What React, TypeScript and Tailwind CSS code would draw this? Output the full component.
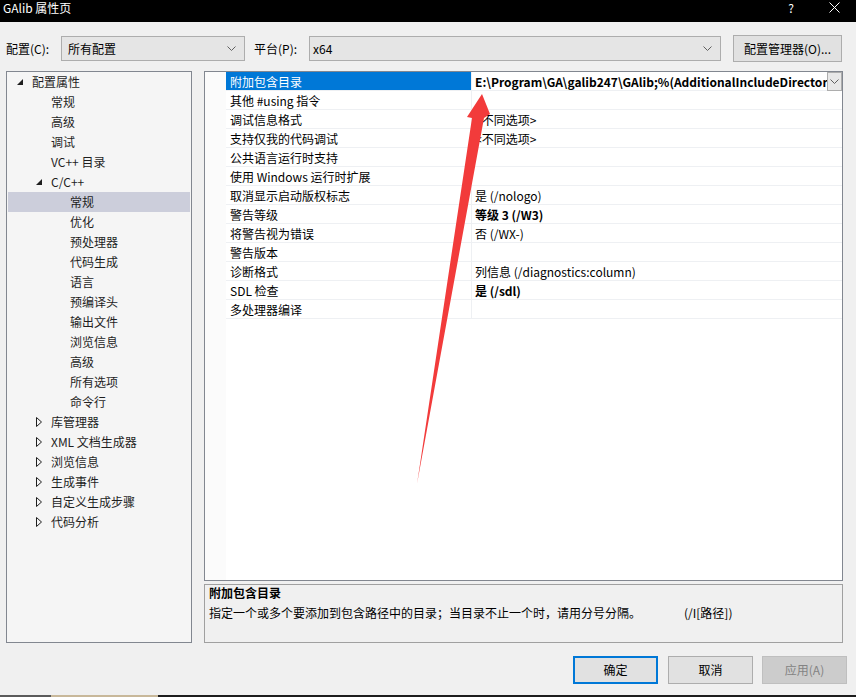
import React from "react";

const font = "font-['Noto_Sans_CJK_SC','Microsoft_YaHei',sans-serif]";

interface TreeItemProps {
  label: string;
  level: number;
  expander?: "open" | "closed";
  selected?: boolean;
}

const treeItems: TreeItemProps[] = [
  { label: "配置属性", level: 0, expander: "open" },
  { label: "常规", level: 1 },
  { label: "高级", level: 1 },
  { label: "调试", level: 1 },
  { label: "VC++ 目录", level: 1 },
  { label: "C/C++", level: 1, expander: "open" },
  { label: "常规", level: 2, selected: true },
  { label: "优化", level: 2 },
  { label: "预处理器", level: 2 },
  { label: "代码生成", level: 2 },
  { label: "语言", level: 2 },
  { label: "预编译头", level: 2 },
  { label: "输出文件", level: 2 },
  { label: "浏览信息", level: 2 },
  { label: "高级", level: 2 },
  { label: "所有选项", level: 2 },
  { label: "命令行", level: 2 },
  { label: "库管理器", level: 1, expander: "closed" },
  { label: "XML 文档生成器", level: 1, expander: "closed" },
  { label: "浏览信息", level: 1, expander: "closed" },
  { label: "生成事件", level: 1, expander: "closed" },
  { label: "自定义生成步骤", level: 1, expander: "closed" },
  { label: "代码分析", level: 1, expander: "closed" },
];

const props: { name: string; value?: string; bold?: boolean }[] = [
  { name: "附加包含目录", value: "E:\\Program\\GA\\galib247\\GAlib;%(AdditionalIncludeDirectories)", bold: true },
  { name: "其他 #using 指令" },
  { name: "调试信息格式", value: "<不同选项>" },
  { name: "支持仅我的代码调试", value: "<不同选项>" },
  { name: "公共语言运行时支持" },
  { name: "使用 Windows 运行时扩展" },
  { name: "取消显示启动版权标志", value: "是 (/nologo)" },
  { name: "警告等级", value: "等级 3 (/W3)", bold: true },
  { name: "将警告视为错误", value: "否 (/WX-)" },
  { name: "警告版本" },
  { name: "诊断格式", value: "列信息 (/diagnostics:column)" },
  { name: "SDL 检查", value: "是 (/sdl)", bold: true },
  { name: "多处理器编译" },
];

function Chevron({ className }: { className?: string }) {
  return (
    <svg width="9" height="5" viewBox="0 0 9 5" className={className}>
      <polyline points="0.5,0.5 4.5,4.5 8.5,0.5" fill="none" stroke="#606060" strokeWidth="1" />
    </svg>
  );
}

function TreeItem({ label, level, expander, selected }: TreeItemProps) {
  return (
    <div
      className={`h-[20px] mx-[1px] flex items-center ${selected ? "bg-[#cccedb]" : ""}`}
      style={{ paddingLeft: 9 + level * 19 }}
    >
      <span className="w-[15px] flex items-center">
        {expander === "open" && (
          <svg width="6" height="6" viewBox="0 0 6 6">
            <polygon points="6,0 6,6 0,6" fill="#1e1e1e" />
          </svg>
        )}
        {expander === "closed" && (
          <svg width="6" height="10" viewBox="0 0 6 10">
            <polygon points="0.5,0.5 5.5,5 0.5,9.5" fill="none" stroke="#1e1e1e" strokeWidth="1" />
          </svg>
        )}
      </span>
      <span className="text-[12px] leading-[20px] text-[#1e1e1e] whitespace-nowrap">{label}</span>
    </div>
  );
}

export default function App() {
  return (
    <div className={`${font} relative w-[856px] h-[697px] bg-[#f0f0f0] flex flex-col overflow-hidden text-black`}>
      {/* Title bar */}
      <div className="h-[22px] shrink-0 bg-black flex items-start text-white text-[12px] leading-[16px]">
        <span className="pl-[3px]">GAlib 属性页</span>
        <span className="ml-auto mr-[35px] mt-[1px] text-[12px] leading-[14px]">?</span>
        <span className="mr-[16px] mt-[2px]">
          <svg width="11" height="11" viewBox="0 0 11 11">
            <path d="M0.5 0.5 L10.5 10.5 M10.5 0.5 L0.5 10.5" stroke="#fff" strokeWidth="1" />
          </svg>
        </span>
      </div>

      {/* Config row */}
      <div className="flex items-center mt-[13px] h-[27px] text-[12px]">
        <span className="pl-[6px] w-[61px]">配置(C):</span>
        <div className="w-[184px] h-[25px] bg-[#e5e5e5] border border-[#adadad] flex items-center pl-[6px] pr-[8px]">
          <span>所有配置</span>
          <Chevron className="ml-auto" />
        </div>
        <span className="ml-[9px] w-[55px]">平台(P):</span>
        <div className="w-[412px] h-[25px] bg-[#e5e5e5] border border-[#adadad] flex items-center pl-[3px] pr-[8px]">
          <span>x64</span>
          <Chevron className="ml-auto" />
        </div>
        <div className="ml-[12px] w-[109px] h-[27px] bg-[#e1e1e1] border border-[#adadad] flex items-center justify-center">
          配置管理器(O)...
        </div>
      </div>

      {/* Main area */}
      <div className="flex mt-[9px] h-[572px]">
        {/* Tree */}
        <div className="ml-[6px] w-[186px] shrink-0 h-full bg-[#f5f5f5] border border-[#828790]">
          {treeItems.map((item, i) => (
            <TreeItem key={i} {...item} />
          ))}
        </div>

        {/* Right column */}
        <div className="ml-[12px] w-[639px] shrink-0 flex flex-col">
          <div className="h-[510px] bg-white border border-[#828790] flex">
            <div className="w-[21px] shrink-0 bg-[#fbfbfb]" />
            <div className="flex-1 min-w-0 flex flex-col">
              {props.map((p, i) => (
                <div key={i} className="h-[19px] flex text-[12px] leading-[20px] border-b border-[#eef0f3]">
                  <div
                    className={`w-[245px] h-[18px] overflow-hidden shrink-0 pl-[4px] whitespace-nowrap ${i === 0 ? "bg-[#0078d7] text-white" : "text-black"}`}
                  >
                    {p.name}
                  </div>
                  <div className="w-px shrink-0 bg-[#eef0f3]" />
                  <div className="flex-1 flex min-w-0">
                    <div className={`flex-1 min-w-0 h-[18px] pl-[3px] whitespace-nowrap overflow-hidden ${p.bold ? "font-bold" : ""}`}>
                      {p.value}
                    </div>
                    {i === 0 && (
                      <div className="w-[15px] shrink-0 h-[19px] bg-[#e8e8e8] border border-[#adadad] flex items-center justify-center">
                        <Chevron />
                      </div>
                    )}
                  </div>
                </div>
              ))}
            </div>
          </div>

          {/* Description */}
          <div className="mt-[3px] h-[59px] border border-[#a0a0a0] bg-[#f0f0f0] px-[4px] text-[12px] leading-[16px]">
            <div className="font-bold">附加包含目录</div>
            <div className="mt-[4px] whitespace-nowrap">
              指定一个或多个要添加到包含路径中的目录；当目录不止一个时，请用分号分隔。
              <span className="ml-[43px]">(/I[路径])</span>
            </div>
          </div>
        </div>
      </div>

      {/* Buttons */}
      <div className="flex mt-[13px] h-[28px] text-[12px] pl-[573px] gap-[10px]">
        <div className="w-[85px] h-[28px] bg-[#e1e1e1] border-2 border-[#0078d7] flex items-center justify-center">确定</div>
        <div className="w-[85px] h-[28px] bg-[#e1e1e1] border border-[#adadad] flex items-center justify-center">取消</div>
        <div className="-ml-[1px] w-[85px] h-[28px] bg-[#cccccc] border border-[#bfbfbf] text-[#838383] flex items-center justify-center">
          应用(A)
        </div>
      </div>

      {/* Taskbar remnant */}
      <div className="mt-auto h-[2px] flex">
        <div className="w-[51px] bg-[#5a5a5a]" />
        <div className="w-[107px] bg-[#c8b89a]" />
        <div className="flex-1 bg-[#1c1c1c]" />
      </div>

      {/* Red annotation arrow */}
      <svg className="absolute left-0 top-0 pointer-events-none" width="856" height="697" viewBox="0 0 856 697">
        <polygon points="482,94 490,114 484,118 417,484 472,118 467,117" fill="#f23b3b" />
      </svg>
    </div>
  );
}
